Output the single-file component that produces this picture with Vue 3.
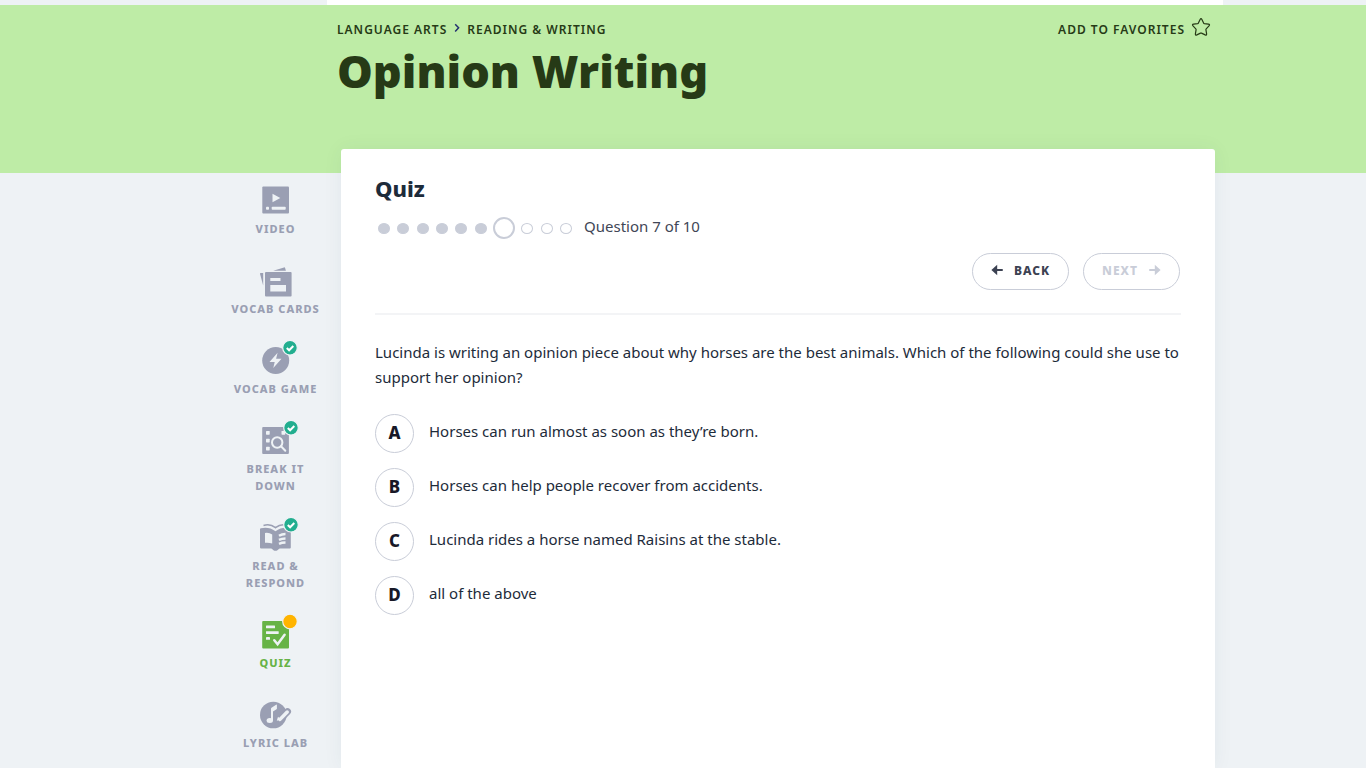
<script setup>
import { ref } from 'vue'

const activities = [
  { id: 'video', label: 'Video' },
  { id: 'cards', label: 'Vocab Cards' },
  { id: 'game', label: 'Vocab Game', done: true, badgeX: 30 },
  { id: 'break', label: 'Break It Down', done: true, badgeX: 31 },
  { id: 'read', label: 'Read & Respond', done: true, badgeX: 31 },
  { id: 'quiz', label: 'Quiz', active: true, badgeX: 30 },
  { id: 'lyric', label: 'Lyric Lab' }
]

const answers = [
  { letter: 'A', text: 'Horses can run almost as soon as they’re born.' },
  { letter: 'B', text: 'Horses can help people recover from accidents.' },
  { letter: 'C', text: 'Lucinda rides a horse named Raisins at the stable.' },
  { letter: 'D', text: 'all of the above' }
]

const total = 10
const current = ref(7)
const selected = ref('')
</script>

<template>
  <div class="page">
    <div class="strip"><div class="wrap"><div class="strip-fill"></div></div></div>

    <header class="hero">
      <div class="wrap">
        <div class="hero-inner">
          <div class="hero-top">
            <nav class="crumbs" aria-label="Breadcrumb">
              <a href="#">Language Arts</a>
              <svg class="chevron" viewBox="0 0 6 12" aria-hidden="true"><path d="M1.2 1.2 4.6 4.8 1.2 8.4" /></svg>
              <a href="#">Reading &amp; Writing</a>
            </nav>
            <button class="favorite" type="button">
              Add to Favorites
              <svg class="star" viewBox="0 0 20 24" aria-hidden="true">
                <path d="M9.1 2.6q.9-1.800 1.800 0l1.700 3.500q.2.500.8.600l4 .5q1.900.3.600 1.700l-2.800 2.900q-.4.400-.3.900l.7 4.100q.2 1.800-1.400 1.100l-3.700-1.800q-.5-.2-1 0l-3.700 1.800q-1.600.7-1.400-1.100l.7-4.100q.1-.5-.3-.9L2 8.900Q.7 7.500 2.600 7.200l4-.5q.6-.1.8-.6z" />
              </svg>
            </button>
          </div>
          <h1>Opinion Writing</h1>
        </div>
      </div>
    </header>

    <div class="wrap body">
      <nav class="side" aria-label="Activities">
        <a v-for="a in activities" :key="a.id" href="#" class="item" :class="{ active: a.active }">
          <svg class="icon" viewBox="0 0 32 32" aria-hidden="true">
            <g v-if="a.id === 'video'">
              <rect x="2.3" y="1.5" width="26.7" height="27" rx="1" />
              <path class="cut" d="M12.5 8.800v8.500l7.800-4.250z" />
              <rect class="cut" x="6" y="21.800" width="3" height="3" rx=".8" />
              <rect class="cut" x="11.7" y="21.800" width="14" height="3" rx=".8" />
            </g>
            <g v-else-if="a.id === 'cards'">
              <rect x="5" y="7" width="26.6" height="24.500" rx="1" />
              <path d="M13.2 5.7 24 2.4q.8-.3 1.1.5l.8 2.8z" />
              <path d="M0 8.700q0-.5.6-.6L3.2 8v12.500z" />
              <rect class="cut" x="10.3" y="13" width="10.2" height="3" />
              <rect class="cut" x="10.3" y="20" width="15.7" height="6.500" />
            </g>
            <g v-else-if="a.id === 'game'">
              <circle cx="15.7" cy="15.5" r="13.5" />
              <path class="cut" d="m17.600 7.800-8.100 9.200h5.200l-1.400 6 8.200-9.300h-5.400z" />
            </g>
            <g v-else-if="a.id === 'break'">
              <rect x="2.2" y="2" width="26.7" height="27" rx="1" />
              <rect class="cut" x="6" y="6" width="3.7" height="3.7" rx=".6" />
              <rect class="cut" x="6" y="13.7" width="3.7" height="3.7" rx=".6" />
              <rect class="cut" x="6" y="21.7" width="3.7" height="3.7" rx=".6" />
              <rect class="cut" x="21.5" y="6" width="3.7" height="3.7" rx=".6" />
              <circle class="line" cx="17.2" cy="17.5" r="5.2" />
              <path class="line" d="m21 21.300 4.300 4.500" />
            </g>
            <g v-else-if="a.id === 'read'">
              <path d="M1 6.200C6 5 11 5.800 15.500 9.200 20 5.800 25 5 30 6.200q.8.200.8 1v18.300q0 1-1 1h-10c-1.500.2-1.500 2.300-4.300 2.300s-2.800-2.100-4.300-2.300H1.200q-1.200 0-1.200-1V7.200q0-.8 1-1z" />
              <path class="cut" d="M5 11q4-.6 7.200 1.400v9.200Q9 20.300 5 20.800z" />
              <path class="thin" d="M19 13.800q2.800-1.700 6.500-1.700M19 17.800q2.800-1.400 6.500-1.400M19 21.800q2.800-1.300 6.500-1.300" />
              <path class="pages" d="M3.500 3.500C8 1.800 12.200 3 15.500 5.700 18.800 3 23 1.800 27.500 3.500" />
            </g>
            <g v-else-if="a.id === 'quiz'">
              <rect x="2.2" y="2" width="26.8" height="27.5" rx="1" />
              <rect class="cut" x="6" y="6.5" width="9" height="2.8" rx=".4" />
              <rect class="cut" x="6" y="12.2" width="12.7" height="2.8" rx=".4" />
              <rect class="cut" x="6" y="18" width="4" height="2.8" rx=".4" />
              <path class="tick" d="m14.300 21.200 3.300 4 7-9.500" />
            </g>
            <g v-else>
              <circle cx="13.3" cy="16" r="13.3" />
              <path class="pen" d="m19.500 20.800 8-8.200" />
              <path class="pen-core" d="m20 20.400 7.200-7.400" />
              <path class="cut" d="m16.800 21.800 1.200-4.100 2.900 2.800z" />
              <ellipse class="cut" cx="9.8" cy="21.6" rx="3.2" ry="2.5" />
              <path class="cut" d="M11 21.500V9.600q0-.6.500-.9l4.600-3q.8-.4.800.5v3.200q0 .5-.4.800l-3.500 2.300v9z" />
            </g>

            <g v-if="a.done">
              <circle class="badge done" :cx="a.badgeX" cy="2.7" r="7.3" />
              <path class="check" :d="`M${a.badgeX - 3.2} 3l2.300 2.300L${a.badgeX + 3.3} 1`" />
            </g>
            <circle v-if="a.active" class="badge now" :cx="a.badgeX" cy="2.5" r="7.3" />
          </svg>
          <span class="label">{{ a.label }}</span>
        </a>
      </nav>

      <main class="card">
        <h2>Quiz</h2>
        <div class="progress">
          <div class="dots" aria-hidden="true">
            <span v-for="n in total" :key="n" class="dot" :class="{ past: n < current, here: n === current }"></span>
          </div>
          <span class="count">Question {{ current }} of {{ total }}</span>
        </div>

        <div class="actions">
          <button class="pill" type="button">
            <svg class="arrow" viewBox="0 0 12 14" aria-hidden="true"><path d="M6.200.8v10.400L.4 6z" /><path class="shaft" d="M4 6h7" /></svg>
            Back
          </button>
          <button class="pill" type="button" disabled>
            Next
            <svg class="arrow" viewBox="0 0 12 14" aria-hidden="true"><path d="M5.800.8v10.400L11.600 6z" /><path class="shaft" d="M8 6H1" /></svg>
          </button>
        </div>

        <p class="question">Lucinda is writing an opinion piece about why horses are the best animals. Which of the following could she use to support her opinion?</p>

        <div class="answers">
          <button v-for="o in answers" :key="o.letter" type="button" class="answer" :aria-pressed="selected === o.letter" @click="selected = o.letter">
            <span class="letter">{{ o.letter }}</span>
            <span class="answer-text">{{ o.text }}</span>
          </button>
        </div>
      </main>
    </div>
  </div>
</template>

<style>
body {
  background: #eef2f5;
}
</style>

<style scoped>
.page {
  min-height: 100vh;
  display: flex;
  flex-direction: column;
  font-family: "Noto Sans", "Open Sans", sans-serif;
  color: #1d2b3a;
}
.page *, .page {
  box-sizing: border-box;
}
button {
  font: inherit;
  color: inherit;
  background: none;
  border: 0;
  padding: 0;
  cursor: pointer;
}
a {
  color: inherit;
  text-decoration: none;
}
.wrap {
  width: 100%;
  max-width: 1080px;
  margin: 0 auto;
  padding-left: 184px;
}
.strip-fill {
  height: 5px;
  background: #fff;
}
.hero {
  background: #beeca6;
  color: #263a16;
}
.hero-inner {
  height: 168px;
  padding: 12px 12px 0 10px;
}
.hero-top {
  display: flex;
  justify-content: space-between;
  align-items: center;
  height: 24px;
  font-size: 12px;
  font-weight: 600;
  letter-spacing: 1px;
  text-transform: uppercase;
}
.crumbs {
  display: flex;
  align-items: center;
  gap: 7px;
}
.chevron {
  width: 6px;
  height: 12px;
  fill: none;
  stroke: #23306e;
  stroke-width: 1.5;
}
.favorite {
  display: flex;
  align-items: center;
  gap: 6px;
  text-transform: inherit;
  letter-spacing: inherit;
}
.star {
  width: 20px;
  height: 24px;
  fill: none;
  stroke: #263a16;
  stroke-width: 1.2;
}
h1 {
  margin: 0;
  font-size: 45px;
  line-height: 60px;
  font-weight: 900;
}
.body {
  flex: 1;
  display: flex;
  padding-left: 80px;
}
.side {
  flex: 0 0 105px;
  display: flex;
  flex-direction: column;
  gap: 28px;
  padding-top: 12px;
}
.item {
  display: flex;
  flex-direction: column;
  align-items: center;
  gap: 3px;
  color: #9a9fb3;
}
.icon {
  width: 32px;
  height: 32px;
  overflow: visible;
  fill: currentColor;
}
.label {
  max-width: 100px;
  font-size: 11px;
  line-height: 17px;
  font-weight: 800;
  letter-spacing: 1px;
  text-align: center;
  text-transform: uppercase;
}
.item.active {
  color: #67b346;
}
.cut {
  fill: #eef2f5;
}
.line, .tick, .thin {
  fill: none;
  stroke: #eef2f5;
  stroke-width: 2;
  stroke-linecap: round;
}
.tick {
  stroke-width: 2.5;
}
.thin {
  stroke-width: 2.5;
  stroke-linecap: butt;
}
.pages {
  fill: none;
  stroke: currentColor;
  stroke-width: 1.5;
}
.pen {
  stroke: currentColor;
  stroke-width: 7;
  stroke-linecap: round;
}
.pen-core {
  stroke: #eef2f5;
  stroke-width: 3.5;
  stroke-linecap: round;
}
.badge {
  stroke: #eef2f5;
  stroke-width: 1.2;
}
.done {
  fill: #22ae8f;
}
.now {
  fill: #ffb400;
}
.check {
  fill: none;
  stroke: #fff;
  stroke-width: 2;
}
.card {
  flex: 1;
  min-width: 0;
  margin: -24px 8px 0 13px;
  padding: 24px 34px 0;
  background: #fff;
  border-radius: 3px 3px 0 0;
  box-shadow: 0 0 20px rgba(40, 60, 90, 0.06);
}
h2 {
  margin: 0;
  font-size: 22px;
  line-height: 30px;
  font-weight: 800;
}
.progress {
  display: flex;
  align-items: center;
  gap: 12px;
  height: 32px;
  margin-top: 9px;
  padding-left: 3px;
}
.dots {
  display: flex;
  align-items: center;
  justify-content: space-between;
  width: 194px;
}
.dot {
  width: 12px;
  height: 11px;
  border: 1px solid #c9cdd8;
  border-radius: 50%;
}
.dot.past {
  background: #c9cdd8;
}
.dot.here {
  width: 22px;
  height: 22px;
  margin: 0 -1px;
  border-width: 2px;
}
.count {
  padding-bottom: 4px;
  font-size: 15px;
  line-height: 24px;
  color: #414656;
}
.actions {
  display: flex;
  justify-content: flex-end;
  gap: 14px;
  padding: 9px 1px 23px 0;
  border-bottom: 2px solid #f3f4f6;
}
.pill {
  display: flex;
  align-items: center;
  justify-content: center;
  gap: 11px;
  width: 97px;
  height: 37px;
  padding-bottom: 2px;
  border: 1px solid #c9cdd8;
  border-radius: 19px;
  font-size: 12px;
  font-weight: 800;
  letter-spacing: 1px;
  text-transform: uppercase;
  color: #3c4252;
}
.pill:disabled {
  color: #c9cdd8;
}
.arrow {
  width: 12px;
  height: 14px;
  fill: currentColor;
}
.shaft {
  stroke: currentColor;
  stroke-width: 2;
  stroke-linecap: round;
}
.question {
  margin: 25px 0 24px;
  font-size: 15px;
  line-height: 25px;
}
.answers {
  display: flex;
  flex-direction: column;
  align-items: flex-start;
  gap: 15px;
}
.answer {
  display: flex;
  align-items: center;
  gap: 15px;
  font-size: 15px;
  line-height: 25px;
  text-align: left;
}
.answer-text {
  padding-bottom: 4px;
}
.letter {
  display: flex;
  align-items: center;
  justify-content: center;
  width: 39px;
  height: 39px;
  padding-bottom: 2px;
  border: 1px solid #c9cdd8;
  border-radius: 50%;
  font-size: 17px;
  font-weight: 800;
  color: #181827;
}
</style>
